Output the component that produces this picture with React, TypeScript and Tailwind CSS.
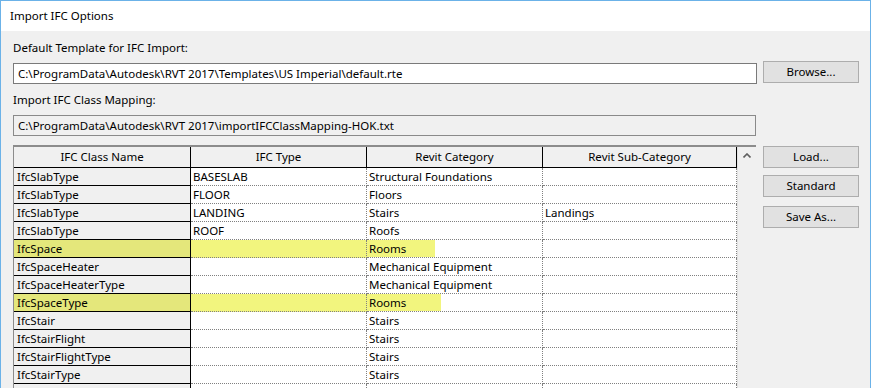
import React from 'react';

type Row = { name: string; type: string; cat: string; sub: string; hl?: string };

const rows: Row[] = [
  { name: 'IfcSlabType', type: 'BASESLAB', cat: 'Structural Foundations', sub: '' },
  { name: 'IfcSlabType', type: 'FLOOR', cat: 'Floors', sub: '' },
  { name: 'IfcSlabType', type: 'LANDING', cat: 'Stairs', sub: 'Landings' },
  { name: 'IfcSlabType', type: 'ROOF', cat: 'Roofs', sub: '' },
  { name: 'IfcSpace', type: '', cat: 'Rooms', sub: '', hl: 'w-[68px]' },
  { name: 'IfcSpaceHeater', type: '', cat: 'Mechanical Equipment', sub: '' },
  { name: 'IfcSpaceHeaterType', type: '', cat: 'Mechanical Equipment', sub: '' },
  { name: 'IfcSpaceType', type: '', cat: 'Rooms', sub: '', hl: 'w-[74px]' },
  { name: 'IfcStair', type: '', cat: 'Stairs', sub: '' },
  { name: 'IfcStairFlight', type: '', cat: 'Stairs', sub: '' },
  { name: 'IfcStairFlightType', type: '', cat: 'Stairs', sub: '' },
  { name: 'IfcStairType', type: '', cat: 'Stairs', sub: '' },
  { name: 'IfcSwitchingDevice', type: '', cat: 'Electrical Fixtures', sub: '' },
];

function Button({ label, className = '' }: { label: string; className?: string }) {
  return (
    <div
      className={`w-[96px] h-[22px] bg-[#e1e1e1] border border-[#adadad] flex items-center justify-center leading-[20px] ${className}`}
    >
      {label}
    </div>
  );
}

export default function App() {
  const dotted = 'border-r border-b border-dotted border-[#808080]';

  return (
    <div className="w-[871px] h-[388px] overflow-hidden bg-[#f0f0f0] border-l border-t border-r border-[#6bb2e8] font-['Noto_Sans',sans-serif] text-[11.5px] text-black">
      {/* Title bar */}
      <div className="h-[30px] bg-white pl-[9px] flex items-center leading-[16px]">
        Import IFC Options
      </div>

      <div className="pl-[12px]">
        <div className="pt-[9px] h-[30px] leading-[16px]">Default Template for IFC Import:</div>

        <div className="flex items-start">
          <div className="mt-[2px] w-[744px] h-[21px] bg-white border border-[#7a7a7a] pl-[4px] leading-[19px]">
            C:\ProgramData\Autodesk\RVT 2017\Templates\US Imperial\default.rte
          </div>
          <Button label="Browse..." className="ml-[6px]" />
        </div>

        <div className="pt-[8px] h-[31px] leading-[16px]">Import IFC Class Mapping:</div>

        <div className="w-[743px] h-[21px] bg-[#f0f0f0] border border-[#8a8a8a] pl-[4px] leading-[19px]">
          C:\ProgramData\Autodesk\RVT 2017\importIFCClassMapping-HOK.txt
        </div>

        <div className="flex items-start mt-[9px]">
          {/* Table */}
          <div className="w-[743px] border-t-2 border-l border-[#8c8c8c] flex">
            <div className="grid grid-cols-[177px_176px_176px_194px] bg-white">
              {['IFC Class Name', 'IFC Type', 'Revit Category', 'Revit Sub-Category'].map((h) => (
                <div
                  key={h}
                  className="h-[21px] bg-[#f0f0f0] border-r border-b border-black flex items-center justify-center leading-[16px]"
                >
                  {h}
                </div>
              ))}
              {rows.map((r, i) => (
                <React.Fragment key={i}>
                  <div
                    className={`h-[18px] border-r border-b border-black pl-[3px] leading-[17px] whitespace-nowrap overflow-hidden ${
                      r.hl ? 'bg-[#e4e77b]' : 'bg-[#f0f0f0]'
                    }`}
                  >
                    {r.name}
                  </div>
                  <div className={`h-[18px] ${dotted} pl-[2px] leading-[17px] ${r.hl ? 'bg-[#f2f57e]' : ''}`}>
                    {r.type}
                  </div>
                  <div className={`h-[18px] ${dotted} leading-[17px] whitespace-nowrap overflow-hidden`}>
                    <div className={`h-full pl-[2px] ${r.hl ? `${r.hl} bg-[#f2f57e]` : ''}`}>{r.cat}</div>
                  </div>
                  <div className={`h-[18px] ${dotted} pl-[2px] leading-[17px]`}>{r.sub}</div>
                </React.Fragment>
              ))}
            </div>
            {/* Scrollbar */}
            <div className="w-[18px] bg-[#f0f0f0] border-l border-[#e2e2e2] flex flex-col items-center pt-[6px]">
              <svg width="8" height="5" viewBox="0 0 8 5">
                <path d="M0.5 4.5 L4 1 L7.5 4.5" fill="none" stroke="#606060" strokeWidth="1.6" />
              </svg>
            </div>
          </div>

          {/* Right buttons */}
          <div className="ml-[7px] flex flex-col">
            <Button label="Load..." className="mt-[1px]" />
            <Button label="Standard" className="mt-[7px]" />
            <Button label="Save As..." className="mt-[9px]" />
          </div>
        </div>
      </div>
    </div>
  );
}
